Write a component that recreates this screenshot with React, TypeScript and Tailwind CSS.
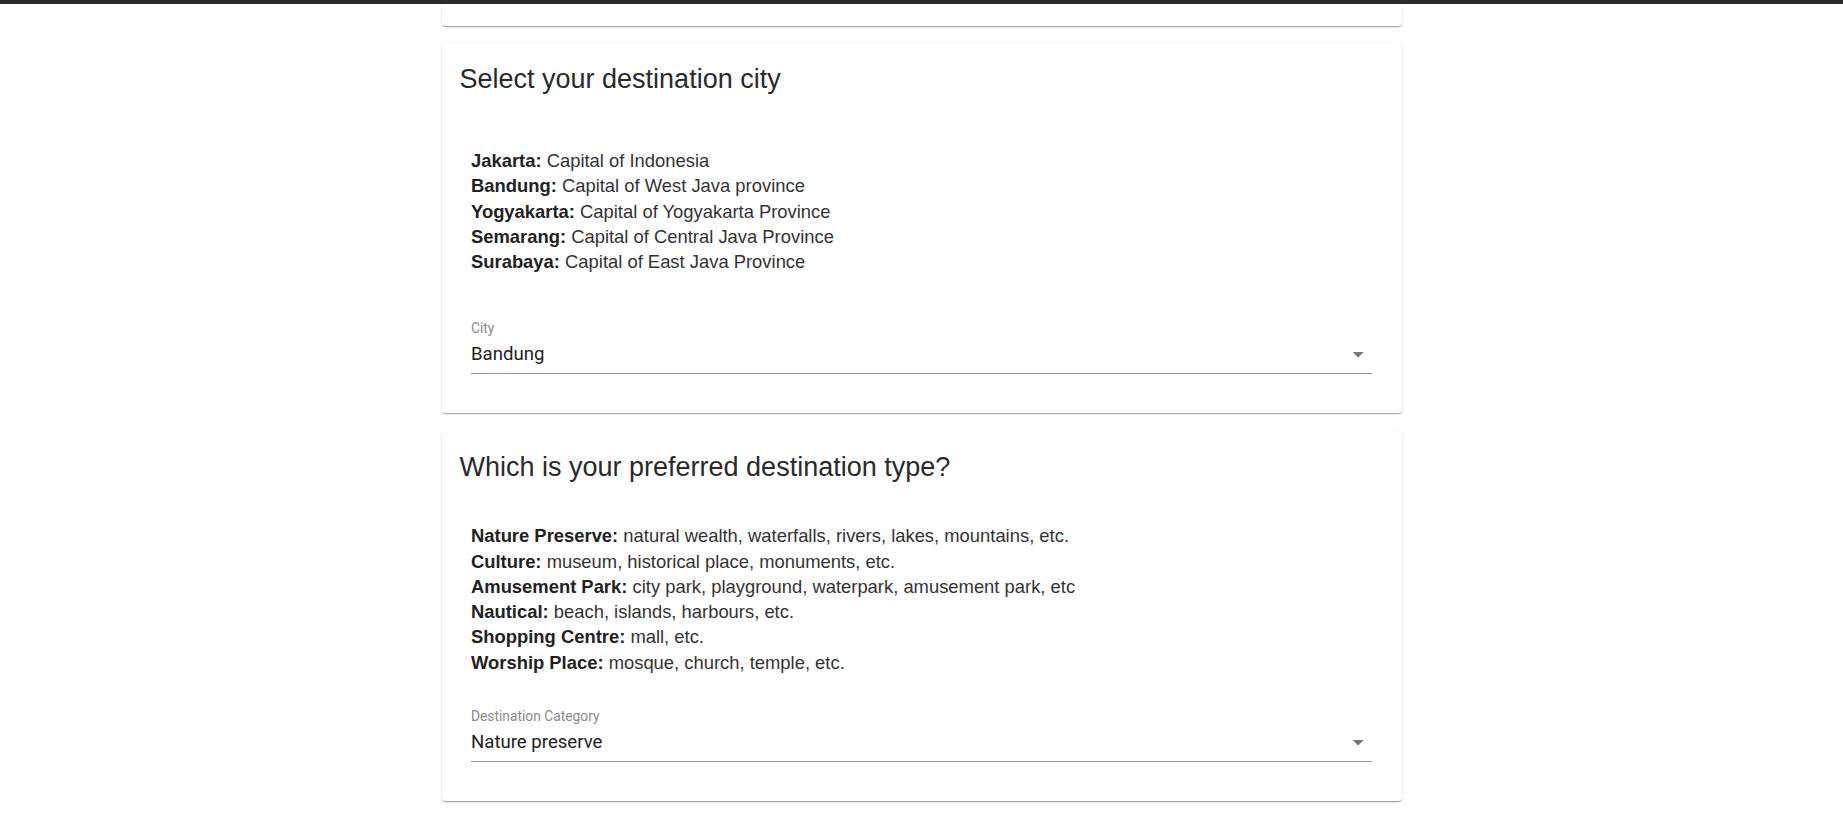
import { ReactNode } from "react";

interface Item {
  name: string;
  desc: string;
}

const cities: Item[] = [
  { name: "Jakarta:", desc: "Capital of Indonesia" },
  { name: "Bandung:", desc: "Capital of West Java province" },
  { name: "Yogyakarta:", desc: "Capital of Yogyakarta Province" },
  { name: "Semarang:", desc: "Capital of Central Java Province" },
  { name: "Surabaya:", desc: "Capital of East Java Province" },
];

const types: Item[] = [
  { name: "Nature Preserve:", desc: "natural wealth, waterfalls, rivers, lakes, mountains, etc." },
  { name: "Culture:", desc: "museum, historical place, monuments, etc." },
  { name: "Amusement Park:", desc: "city park, playground, waterpark, amusement park, etc" },
  { name: "Nautical:", desc: "beach, islands, harbours, etc." },
  { name: "Shopping Centre:", desc: "mall, etc." },
  { name: "Worship Place:", desc: "mosque, church, temple, etc." },
];

const cardShadow =
  "shadow-[0_2px_1px_-1px_rgba(0,0,0,0.2),0_1px_1px_0_rgba(0,0,0,0.14),0_1px_3px_0_rgba(0,0,0,0.12)]";

const SelectField = ({ label, value }: { label: string; value: string }) => (
  <div className="font-['Roboto',sans-serif]">
    <div className="text-[13.8px] leading-[16px] text-[#8a8a8a]">{label}</div>
    <div className="relative mt-[6.5px] border-b border-[#949494] pb-[6.5px]">
      <div className="text-[18.6px] leading-[24px] text-[#222]">{value}</div>
      <svg
        viewBox="0 0 24 24"
        className="absolute right-[1px] top-[-1px] h-[26.4px] w-[26.4px] fill-[#757575]"
      >
        <path d="M7 10l5 5 5-5z" />
      </svg>
    </div>
  </div>
);

const QuestionCard = ({
  title,
  items,
  children,
}: {
  title: string;
  items: Item[];
  children: ReactNode;
}) => (
  <div className={`flex h-[370px] w-[960px] flex-col rounded-[4px] bg-white ${cardShadow}`}>
    <h2 className="pl-[18px] pt-[19.7px] font-['Liberation_Sans',Arial,sans-serif] text-[27px] leading-[32px] text-[#2a2a2a]">
      {title}
    </h2>
    <div className="flex flex-1 items-center px-[29.5px] pt-[8px]">
      <div className="font-['Liberation_Sans',Arial,sans-serif] text-[18.4px] leading-[25.3px] text-[#333]">
        {items.map((it) => (
          <div key={it.name}>
            <span className="font-bold text-[#222]">{it.name}</span> {it.desc}
          </div>
        ))}
      </div>
    </div>
    <div className="px-[29.5px] pb-[39.3px]">{children}</div>
  </div>
);

export default function App() {
  return (
    <div className="min-h-screen bg-white">
      <div className="h-[4px] w-full bg-[#2b2b2b]" />
      <div className="flex flex-col items-center">
        <div className={`h-[22px] w-[960px] rounded-b-[4px] bg-white ${cardShadow}`} />
        <div className="mt-[17px]">
          <QuestionCard title="Select your destination city" items={cities}>
            <SelectField label="City" value="Bandung" />
          </QuestionCard>
        </div>
        <div className="mt-[18px]">
          <QuestionCard title="Which is your preferred destination type?" items={types}>
            <SelectField label="Destination Category" value="Nature preserve" />
          </QuestionCard>
        </div>
      </div>
    </div>
  );
}
